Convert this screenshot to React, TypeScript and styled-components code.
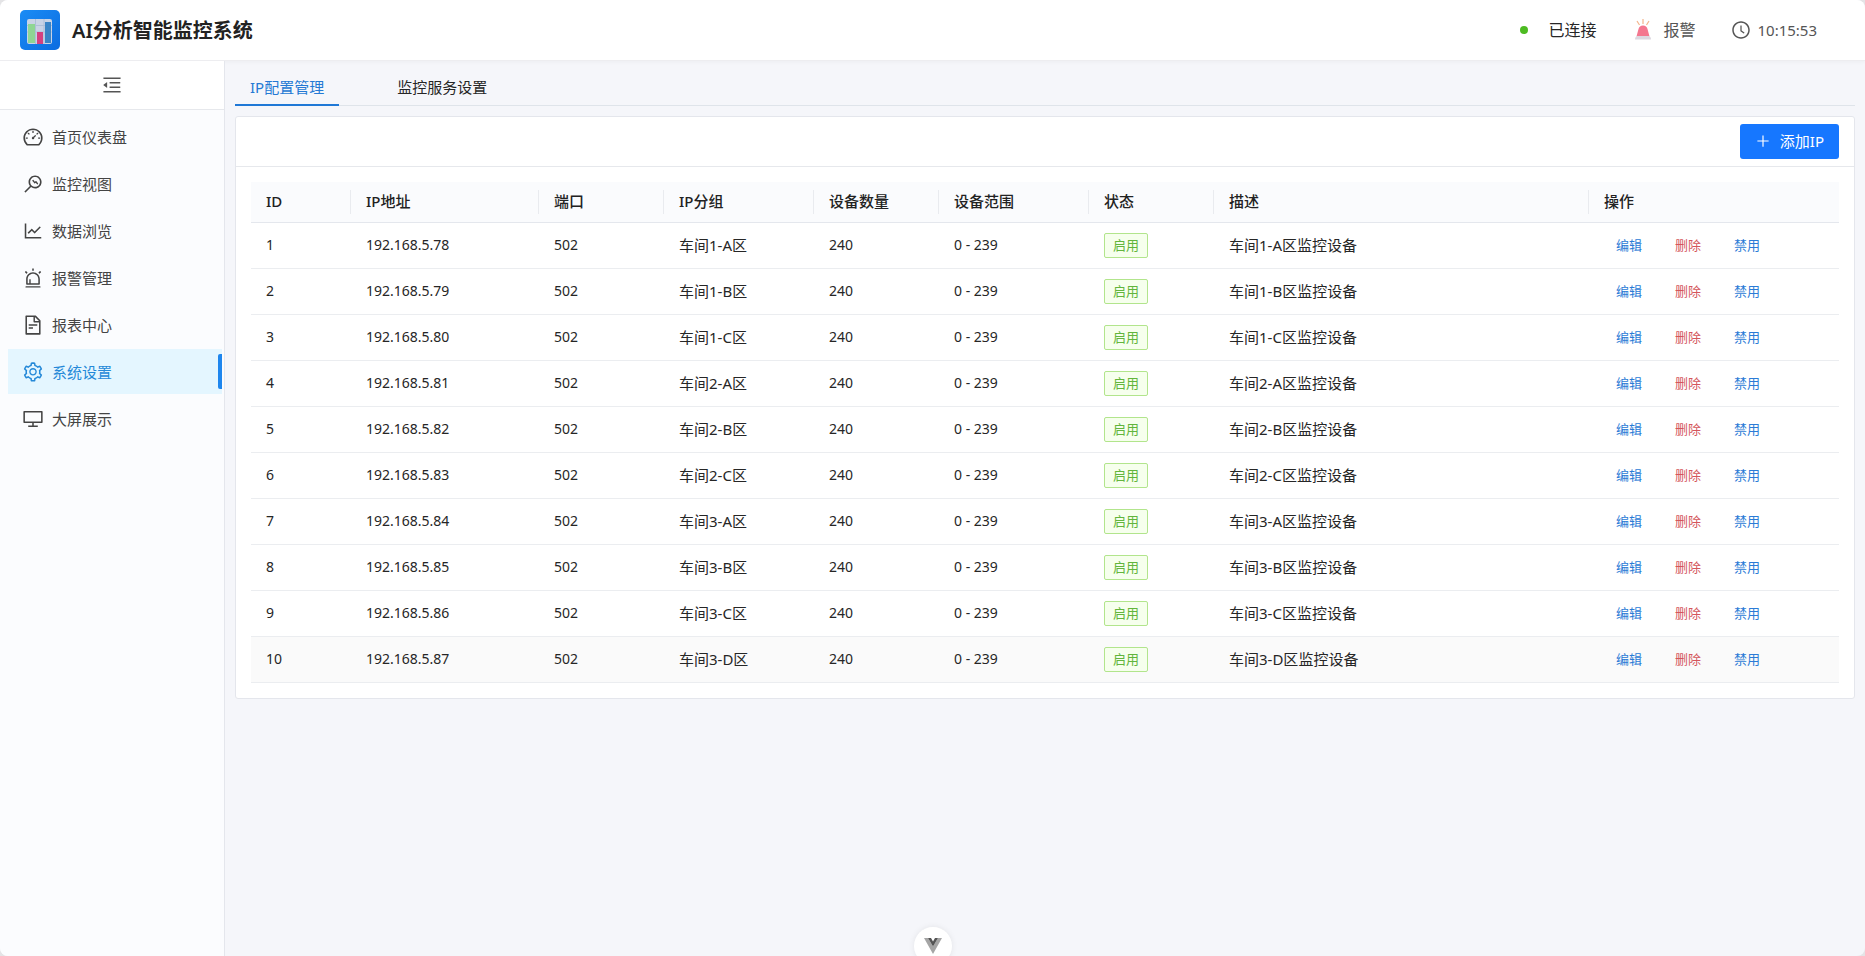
import React from "react";
import styled, { createGlobalStyle } from "styled-components";
import {
  AiOutlineMenuFold, AiOutlineDashboard, AiOutlineMonitor, AiOutlineLineChart, AiOutlineAlert,
  AiOutlineFileText, AiOutlineSetting, AiOutlineDesktop, AiOutlineClockCircle, AiOutlinePlus,
} from "react-icons/ai";

const GlobalStyle = createGlobalStyle`
  *, *::before, *::after { box-sizing: border-box; }
  body {
    margin: 0;
    background: #e4e4e6;
    color: #262626;
    font: 15px/24px "Noto Sans", "Noto Sans CJK SC", sans-serif;
  }
  button { font: inherit; color: inherit; background: none; border: 0; padding: 0; margin: 0; cursor: pointer; }
  a { color: inherit; text-decoration: none; }
`;

const Page = styled.div`
  min-height: 100vh;
  display: flex;
  flex-direction: column;
  background: #f5f6fa;
  border-radius: 8px;
  overflow: hidden;
`;

const Header = styled.header`
  display: flex;
  align-items: center;
  justify-content: space-between;
  height: 61px;
  padding: 0 48px 0 20px;
  background: #fff;
  border-bottom: 1px solid #ededf0;
  box-shadow: 0 1px 4px rgba(0, 0, 0, 0.04);
`;

const Brand = styled.div`
  display: flex;
  align-items: center;
  gap: 12px;
`;

const Title = styled.h1`
  margin: 0;
  padding-top: 2px;
  font-size: 20px;
  line-height: 28px;
  font-weight: 600;
  color: #222;
`;

const StatusBar = styled.div`
  display: flex;
  align-items: center;
  gap: 36px;
`;

const Status = styled.div<{ $gap: number; $color?: string }>`
  display: flex;
  align-items: center;
  gap: ${(p) => p.$gap}px;
  font-size: 16px;
  color: ${(p) => p.$color ?? "#262626"};
`;

const Dot = styled.span`
  width: 8px;
  height: 8px;
  border-radius: 50%;
  background: #4dbb22;
`;

const Time = styled.time`
  font-size: 15px;
`;

const Body = styled.div`
  flex: 1;
  display: flex;
`;

const Sidebar = styled.aside`
  flex: none;
  width: 225px;
  background: #fbfcfe;
  border-right: 1px solid #e4e6ec;
`;

const CollapseButton = styled.button`
  display: flex;
  align-items: center;
  justify-content: center;
  width: 100%;
  height: 49px;
  background: #fff;
  border-bottom: 1px solid #e6e8ec;
  color: #555;
`;

const Nav = styled.nav`
  display: flex;
  flex-direction: column;
  gap: 2px;
  padding: 4px 2px 4px 8px;
`;

const NavLink = styled.a<{ $active?: boolean }>`
  display: flex;
  align-items: center;
  gap: 8px;
  height: 45px;
  padding-left: 14px;
  position: relative;
  color: ${(p) => (p.$active ? "#2589d8" : "#444")};
  background: ${(p) => (p.$active ? "#e4f6ff" : "transparent")};

  &::after {
    content: "";
    display: ${(p) => (p.$active ? "block" : "none")};
    position: absolute;
    right: 0;
    top: 5px;
    bottom: 5px;
    width: 4px;
    border-radius: 2px 0 0 2px;
    background: #1e86ee;
  }
`;

const Main = styled.main`
  flex: 1;
  min-width: 0;
  padding: 6px 10px 10px;
`;

const Tabs = styled.div`
  display: flex;
  gap: 43px;
  border-bottom: 1px solid #dfe4ea;
  margin-bottom: 10px;
`;

const Tab = styled.button<{ $active?: boolean }>`
  height: 39px;
  padding: 3px 15px 0;
  margin-bottom: -1px;
  border-bottom: 2px solid ${(p) => (p.$active ? "#1f78d6" : "transparent")};
  color: ${(p) => (p.$active ? "#2479d4" : "#262626")};
`;

const Card = styled.section`
  background: #fff;
  border: 1px solid #e4e6ec;
  border-radius: 3px;
`;

const Toolbar = styled.div`
  display: flex;
  align-items: center;
  justify-content: flex-end;
  height: 50px;
  padding: 0 15px;
  border-bottom: 1px solid #e6e8ec;
`;

const AddButton = styled.button`
  display: flex;
  align-items: center;
  gap: 9px;
  height: 35px;
  padding: 0 15px 1px;
  border-radius: 3px;
  background: #1677ff;
  color: #fff;
`;

const TableArea = styled.div`
  padding: 15px;
`;

const Table = styled.table`
  width: 100%;
  table-layout: fixed;
  border-collapse: separate;
  border-spacing: 0;
`;

const Th = styled.th<{ $width?: number }>`
  width: ${(p) => (p.$width ? `${p.$width}px` : "auto")};
  height: 41px;
  padding: 0 15px 2px;
  text-align: left;
  font-weight: 500;
  color: #222;
  background: linear-gradient(#e9ebef, #e9ebef) right center / 1px 24px no-repeat #fafbfd;
  border-bottom: 1px solid #e4e7ed;

  &:last-child {
    background: #fafbfd;
  }
`;

const Row = styled.tr<{ $hovered?: boolean }>`
  background: ${(p) => (p.$hovered ? "#fafafa" : "#fff")};
`;

const Td = styled.td<{ $numeric?: boolean }>`
  height: 46px;
  padding: 0 15px 1px;
  border-bottom: 1px solid #ebedf0;
  font-size: ${(p) => (p.$numeric ? 14 : 15)}px;
`;

const Tag = styled.span`
  display: block;
  width: fit-content;
  padding: 0 8px;
  border: 1px solid #b2e58c;
  border-radius: 2px;
  background: #f6ffed;
  color: #62b53c;
  font-size: 13px;
  line-height: 23px;
`;

const Actions = styled.div`
  display: flex;
  gap: 9px;
`;

const Action = styled.button<{ $danger?: boolean }>`
  padding: 0 12px;
  font-size: 13px;
  color: ${(p) => (p.$danger ? "#d4565c" : "#2b7bd6")};
`;

const DevTools = styled.button`
  position: fixed;
  left: 50%;
  bottom: -9px;
  transform: translateX(-50%);
  display: flex;
  justify-content: center;
  width: 38px;
  height: 38px;
  padding-top: 11px;
  border-radius: 50%;
  background: #fff;
  box-shadow: 0 0 6px rgba(0, 0, 0, 0.08);
`;

const Logo = () => (
  <svg width="40" height="40" viewBox="0 0 40 40" aria-hidden="true">
    <defs>
      <linearGradient id="logo-bg" x1="0" y1="0" x2="1" y2="1">
        <stop offset="0" stopColor="#1b8cf5" />
        <stop offset="1" stopColor="#0b6ce0" />
      </linearGradient>
    </defs>
    <rect width="40" height="40" rx="5" fill="url(#logo-bg)" />
    <rect x="7" y="9" width="25" height="25" rx="2" fill="#c9d3e6" />
    <path d="M7 15.500h25M7 22h25M15.500 9v25M24 9v25" stroke="#aebfd8" strokeWidth="1" />
    <rect x="8" y="14" width="7" height="19" fill="#8fd694" />
    <rect x="17" y="22" width="6" height="12" fill="#d6407f" />
    <rect x="25" y="12" width="6" height="21" fill="#3a84c6" />
  </svg>
);

const Siren = () => (
  <svg width="20" height="22" viewBox="-2 0 20 22" aria-hidden="true">
    <path d="M9 0v5M3 2l2.500 4M15 2l-2.500 4" stroke="#f4b58c" strokeWidth="1.2" fill="none" />
    <path d="M2.500 17.500 4.500 10q.8-3.500 4.500-3.500t4.500 3.500l2 7.500z" fill="#f4778f" />
    <path d="M1 20.500q0-3.500 3-3.500h10q3 0 3 3.500z" fill="#dcd8e0" />
  </svg>
);

const navItems = [
  { label: "首页仪表盘", icon: AiOutlineDashboard },
  { label: "监控视图", icon: AiOutlineMonitor },
  { label: "数据浏览", icon: AiOutlineLineChart },
  { label: "报警管理", icon: AiOutlineAlert },
  { label: "报表中心", icon: AiOutlineFileText },
  { label: "系统设置", icon: AiOutlineSetting },
  { label: "大屏展示", icon: AiOutlineDesktop },
];

const columns = [
  { label: "ID", width: 100 },
  { label: "IP地址", width: 188 },
  { label: "端口", width: 125 },
  { label: "IP分组", width: 150 },
  { label: "设备数量", width: 125 },
  { label: "设备范围", width: 150 },
  { label: "状态", width: 125 },
  { label: "描述", width: 375 },
  { label: "操作" },
];

const groups = ["1-A", "1-B", "1-C", "2-A", "2-B", "2-C", "3-A", "3-B", "3-C", "3-D"];
const devices = groups.map((group, i) => ({
  id: i + 1,
  ip: `192.168.5.${78 + i}`,
  group: `车间${group}区`,
}));

export default function App() {
  return (
    <Page>
      <GlobalStyle />
      <Header>
        <Brand>
          <Logo />
          <Title>AI分析智能监控系统</Title>
        </Brand>
        <StatusBar>
          <Status $gap={20}>
            <Dot />
            已连接
          </Status>
          <Status $gap={11} $color="#555">
            <Siren />
            报警
          </Status>
          <Status $gap={6} $color="#555">
            <AiOutlineClockCircle size={20} />
            <Time>10:15:53</Time>
          </Status>
        </StatusBar>
      </Header>
      <Body>
        <Sidebar>
          <CollapseButton aria-label="收起菜单">
            <AiOutlineMenuFold size={22} />
          </CollapseButton>
          <Nav>
            {navItems.map(({ label, icon: Icon }) => (
              <NavLink key={label} href="#" $active={label === "系统设置"}>
                <Icon size={22} />
                {label}
              </NavLink>
            ))}
          </Nav>
        </Sidebar>
        <Main>
          <Tabs role="tablist">
            <Tab role="tab" aria-selected $active>IP配置管理</Tab>
            <Tab role="tab" aria-selected={false}>监控服务设置</Tab>
          </Tabs>
          <Card>
            <Toolbar>
              <AddButton>
                <AiOutlinePlus size={16} />
                添加IP
              </AddButton>
            </Toolbar>
            <TableArea>
              <Table>
                <thead>
                  <tr>
                    {columns.map((c) => (
                      <Th key={c.label} $width={c.width}>{c.label}</Th>
                    ))}
                  </tr>
                </thead>
                <tbody>
                  {devices.map((d) => (
                    <Row key={d.id} $hovered={d.id === 10}>
                      <Td $numeric>{d.id}</Td>
                      <Td $numeric>{d.ip}</Td>
                      <Td $numeric>502</Td>
                      <Td>{d.group}</Td>
                      <Td $numeric>240</Td>
                      <Td $numeric>0 - 239</Td>
                      <Td><Tag>启用</Tag></Td>
                      <Td>{d.group}监控设备</Td>
                      <Td>
                        <Actions>
                          <Action>编辑</Action>
                          <Action $danger>删除</Action>
                          <Action>禁用</Action>
                        </Actions>
                      </Td>
                    </Row>
                  ))}
                </tbody>
              </Table>
            </TableArea>
          </Card>
        </Main>
      </Body>
      <DevTools aria-label="Vue DevTools">
        <svg width="18" height="16" viewBox="0 0 18 16" aria-hidden="true">
          <path d="M0 0h4l5 8.500L14 0h4L9 16z" fill="#a5a5a5" />
          <path d="M4 0h3l2 3.500L11 0h3L9 8.500z" fill="#555" />
        </svg>
      </DevTools>
    </Page>
  );
}
